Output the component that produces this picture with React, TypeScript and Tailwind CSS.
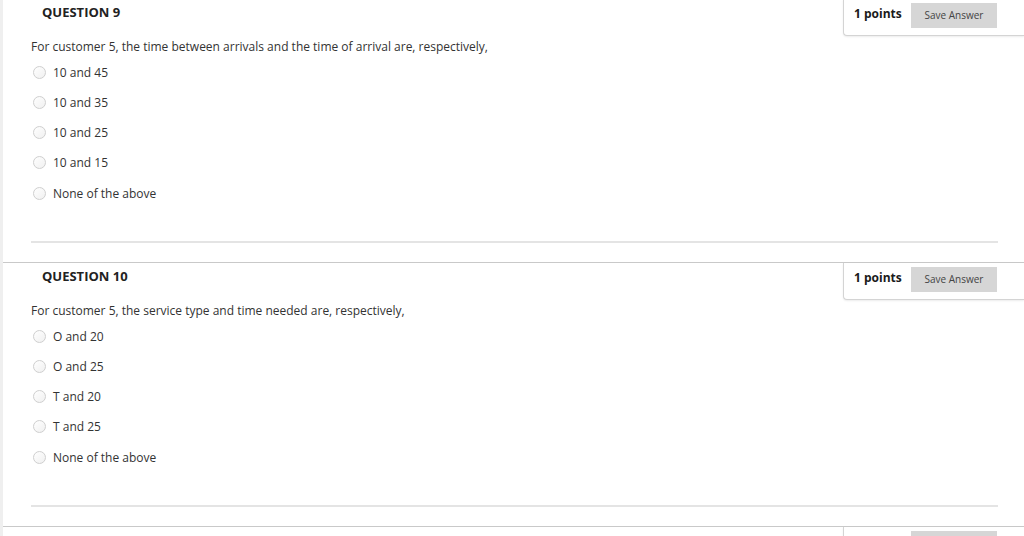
import React from 'react';

type Question = {
  num: number;
  text: string;
  options: string[];
};

const questions: Question[] = [
  {
    num: 9,
    text: 'For customer 5, the time between arrivals and the time of arrival are, respectively,',
    options: ['10 and 45', '10 and 35', '10 and 25', '10 and 15', 'None of the above'],
  },
  {
    num: 10,
    text: 'For customer 5, the service type and time needed are, respectively,',
    options: ['O and 20', 'O and 25', 'T and 20', 'T and 25', 'None of the above'],
  },
];

const PointsBox = ({ empty }: { empty?: boolean }) => (
  <div className="w-[181px] h-[37px] shrink-0 flex items-start border-l border-b border-[#d4d4d4] rounded-bl-[4px] shadow-[0_1px_2px_rgba(0,0,0,0.08)] bg-white">
    <span className="pl-[10px] pt-[6px] w-[67px] text-[12px] leading-[17px] font-bold text-[#1a1a1a]">
      {empty ? '' : '1 points'}
    </span>
    <button className="mt-[4px] w-[86px] h-[25px] bg-[#d6d6d6] text-[10px] text-[#444]">
      {empty ? '' : 'Save Answer'}
    </button>
  </div>
);

const QuestionBlock = ({ q }: { q: Question }) => (
  <div className="h-[264px] border-t border-[#c9c9c9] flex flex-col">
    <div className="h-[37px] flex items-start justify-between">
      <h3 className="pl-[39px] pt-[5px] text-[13px] leading-[16px] font-bold text-[#222]">QUESTION {q.num}</h3>
      <PointsBox />
    </div>
    <div className="pl-[28px] pr-[26px]">
      <p className="mt-[2px] text-[12px] leading-[17px] text-[#333]">{q.text}</p>
      <div className="mt-[2px]">
        {q.options.map((opt) => (
          <label key={opt} className="h-[30.25px] flex items-center gap-[7px] pl-[2px]">
            <span className="w-[13px] h-[13px] rounded-full border border-[#cfcfcf] bg-linear-to-br from-white to-[#f0f0f0]" />
            <span className="text-[12px] leading-[17px] text-[#333]">{opt}</span>
          </label>
        ))}
      </div>
      <div className="mt-[33px] h-[2px] bg-[#e4e4e4]" />
    </div>
  </div>
);

export default function App() {
  return (
    <div className="w-[1024px] h-[536px] overflow-hidden flex bg-white font-['Open_Sans',sans-serif]">
      <div className="w-[3px] shrink-0 bg-[#efefef]" />
      <div className="flex-1 -mt-[2px]">
        {questions.map((q) => (
          <QuestionBlock key={q.num} q={q} />
        ))}
        <div className="h-[40px] border-t border-[#c9c9c9] flex justify-end">
          <PointsBox empty />
        </div>
      </div>
    </div>
  );
}
